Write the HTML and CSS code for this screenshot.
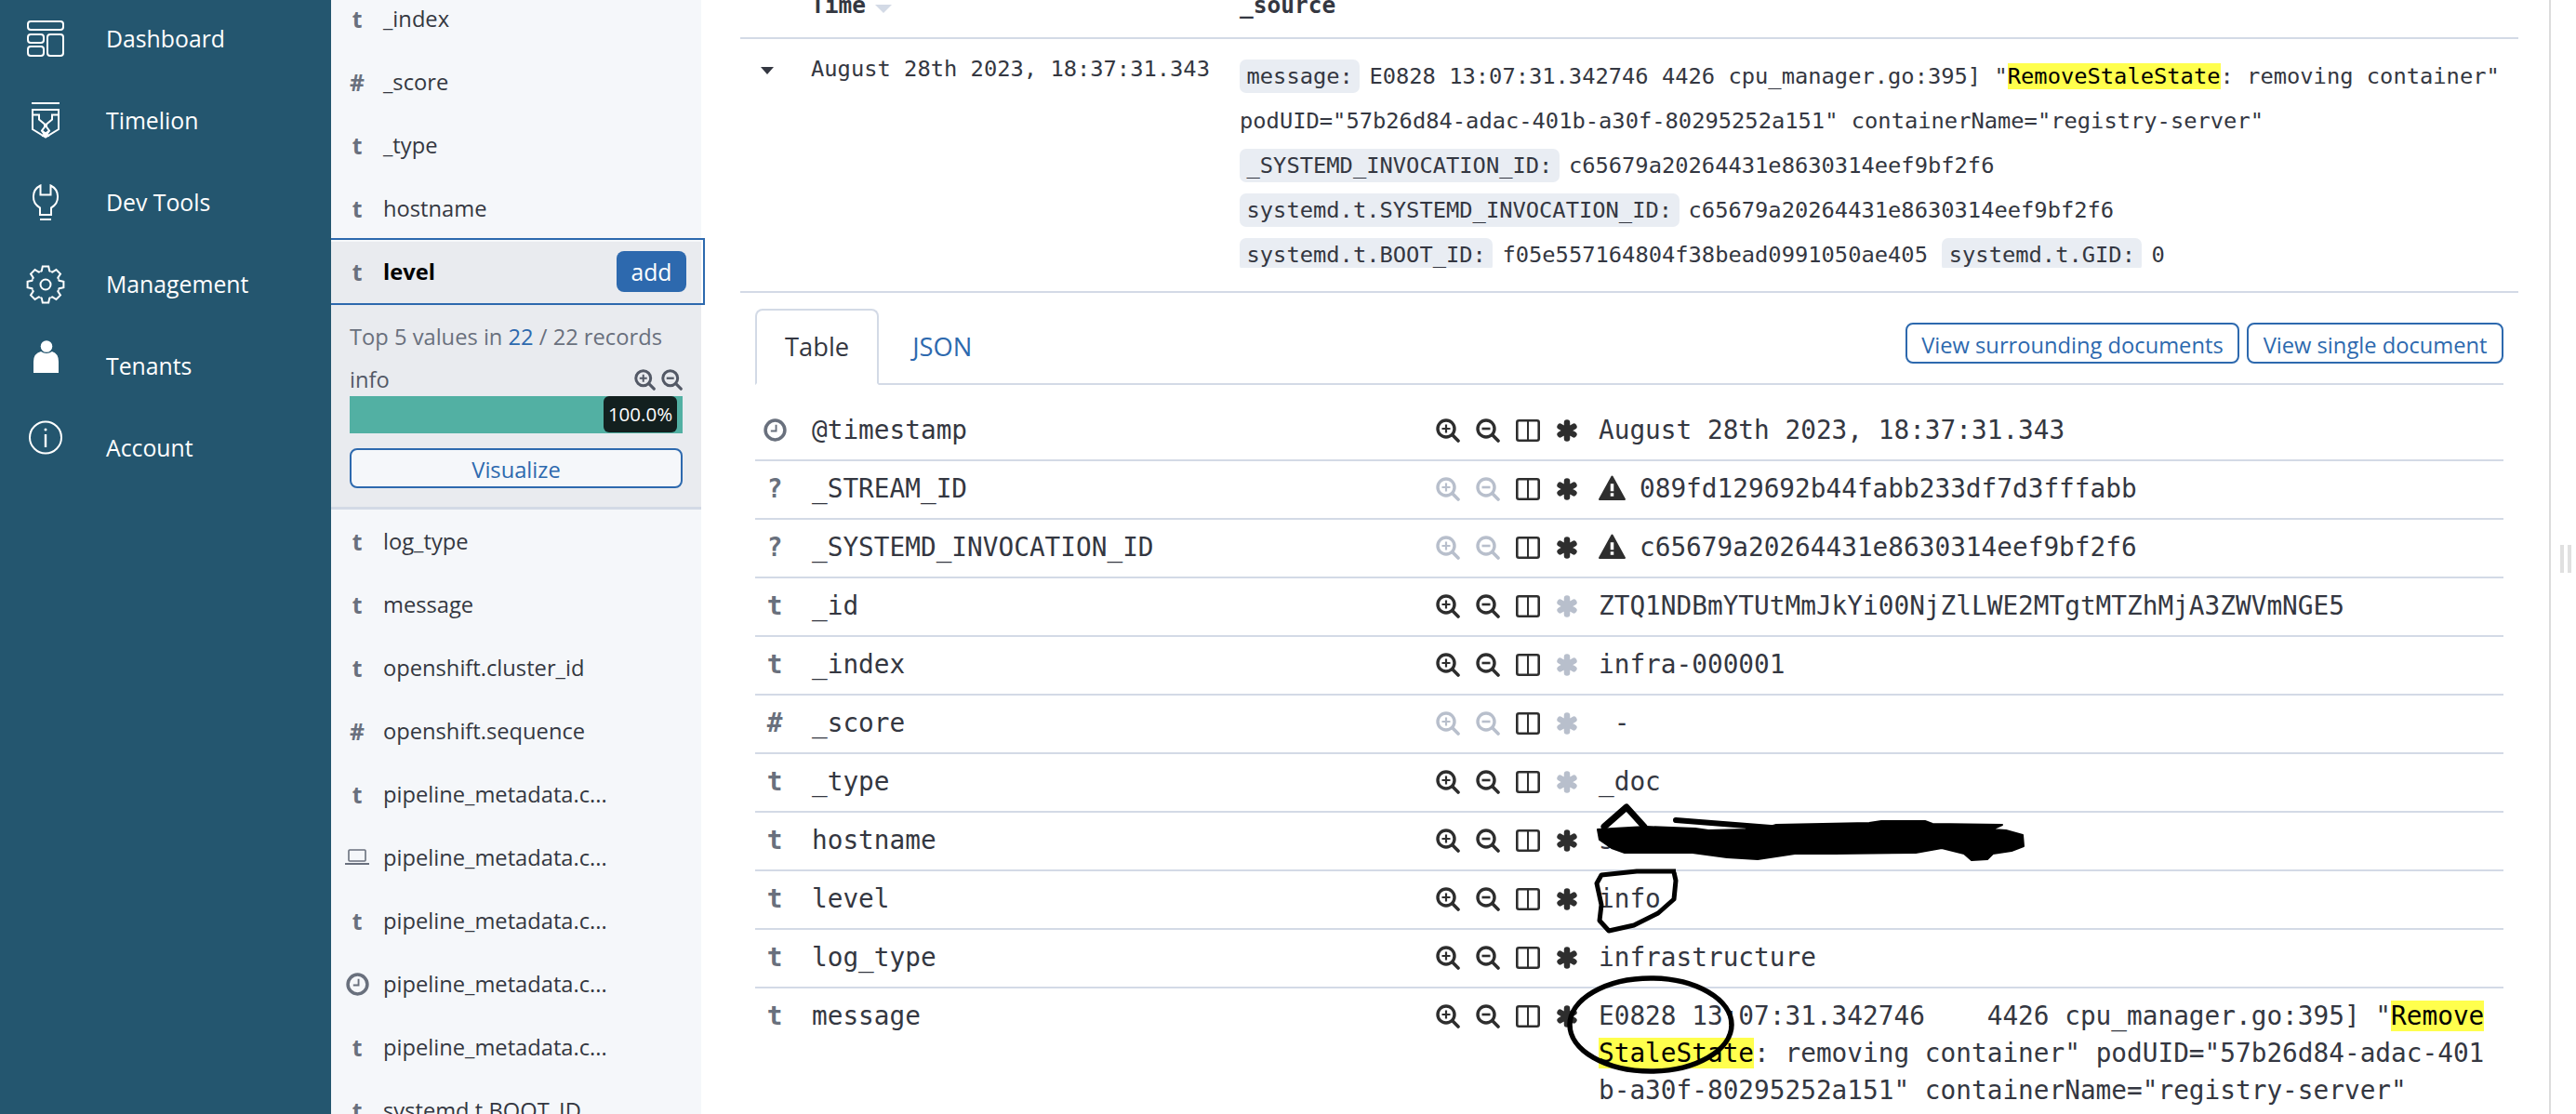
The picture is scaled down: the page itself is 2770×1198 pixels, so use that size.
FILE: index.html
```html
<!DOCTYPE html>
<html lang="en">
<head>
    <meta charset="UTF-8">
    <title>Discover</title>
    <link rel="stylesheet" href="styles.css">
</head>
<body>
    <svg class="defs" width="0" height="0">
        <symbol id="i-zoom-in" viewBox="0 0 26 26">
            <circle cx="11" cy="11" r="9" fill="none" stroke="currentColor" stroke-width="3.4"/>
            <path d="M17.8 17.8L24 24" stroke="currentColor" stroke-width="3.6" stroke-linecap="round"/>
            <path d="M6.500 11h9M11 6.500v9" stroke="currentColor" stroke-width="2.200"/>
        </symbol>
        <symbol id="i-zoom-out" viewBox="0 0 26 26">
            <circle cx="11" cy="11" r="9" fill="none" stroke="currentColor" stroke-width="3.4"/>
            <path d="M17.8 17.8L24 24" stroke="currentColor" stroke-width="3.6" stroke-linecap="round"/>
            <path d="M6.500 11h9" stroke="currentColor" stroke-width="2.600"/>
        </symbol>
        <symbol id="i-col" viewBox="0 0 26 24">
            <rect x="1.3" y="1.3" width="23.4" height="21.4" rx="2" fill="none" stroke="currentColor" stroke-width="2.600"/>
            <path d="M13 1v22" stroke="currentColor" stroke-width="2"/>
        </symbol>
        <symbol id="i-star" viewBox="0 0 24 24">
            <path d="M12 3.500v17M4.600 7.750l14.800 8.500M4.600 16.250l14.800-8.500" stroke="currentColor" stroke-width="6.500" stroke-linecap="round"/>
        </symbol>
        <symbol id="i-warn" viewBox="0 0 28 26">
            <path d="M14 1.500L27 25H1Z" fill="currentColor" stroke="currentColor" stroke-width="2" stroke-linejoin="round"/>
            <path d="M12.300 9h3.400v7.500h-3.400zM12.300 18.500h3.400v3.500h-3.400z" fill="#fff"/>
        </symbol>
        <symbol id="i-clock" viewBox="0 0 24 24">
            <circle cx="12" cy="12" r="10" fill="none" stroke="currentColor" stroke-width="3.400"/>
            <path d="M13 6.500V13H7.500" fill="none" stroke="currentColor" stroke-width="1.800"/>
        </symbol>
        <symbol id="i-laptop" viewBox="0 0 26 18">
            <rect x="4" y="1" width="18" height="12" rx="1" fill="none" stroke="currentColor" stroke-width="1.600"/>
            <path d="M0 16h26" stroke="currentColor" stroke-width="2"/>
        </symbol>
        <symbol id="i-tooth" viewBox="-22 -22 44 44" overflow="visible">
            <path d="M-5.600-14L-4.200-14.600L-3.200-19.400H3.200L4.200-14.600L5.600-14" fill="none" stroke="currentColor" stroke-width="2"/>
        </symbol>
    </svg>

    <div class="app">
        <nav class="sidebar">
            <a class="nav-item">
                <svg class="nav-icon" viewBox="0 0 60 60" fill="none" stroke="currentColor" stroke-width="2">
                    <rect x="10" y="12" width="38" height="9" rx="3"/>
                    <rect x="10" y="26" width="17" height="9" rx="3"/>
                    <rect x="10" y="39" width="17" height="10" rx="3"/>
                    <rect x="31" y="26" width="17" height="23" rx="3"/>
                </svg>
                <span>Dashboard</span>
            </a>
            <a class="nav-item">
                <svg class="nav-icon" viewBox="0 0 60 60" fill="none" stroke="currentColor" stroke-width="2">
                    <path d="M14 12h30M15 19h28v21l-14 8.500-14-8.500z"/>
                    <path d="M15 24.500h7v5l6 5v3l-3 4 4 6 4-6-3-4v-3l6-5v-5h7"/>
                    <path d="M25 41.500l8 6M33 41.500l-8 6"/>
                </svg>
                <span>Timelion</span>
            </a>
            <a class="nav-item">
                <svg class="nav-icon" viewBox="0 0 60 60" fill="none" stroke="currentColor" stroke-width="2">
                    <path d="M23.500 12.500A13.500 13.500 0 0 0 23 36.500V44H35V36.500A13.500 13.500 0 0 0 34.500 12.500V22.500H23.500Z"/>
                    <path d="M23 49h12"/>
                </svg>
                <span>Dev Tools</span>
            </a>
            <a class="nav-item">
                <svg class="nav-icon" viewBox="0 0 60 60" fill="none" stroke="currentColor" stroke-width="2">
                    <circle cx="29" cy="31" r="5.500"/>
                    <g transform="translate(29 31)">
                        <use href="#i-tooth" x="-22" y="-22" width="44" height="44"/>
                        <use href="#i-tooth" x="-22" y="-22" width="44" height="44" transform="rotate(45)"/>
                        <use href="#i-tooth" x="-22" y="-22" width="44" height="44" transform="rotate(90)"/>
                        <use href="#i-tooth" x="-22" y="-22" width="44" height="44" transform="rotate(135)"/>
                        <use href="#i-tooth" x="-22" y="-22" width="44" height="44" transform="rotate(180)"/>
                        <use href="#i-tooth" x="-22" y="-22" width="44" height="44" transform="rotate(225)"/>
                        <use href="#i-tooth" x="-22" y="-22" width="44" height="44" transform="rotate(270)"/>
                        <use href="#i-tooth" x="-22" y="-22" width="44" height="44" transform="rotate(315)"/>
                    </g>
                </svg>
                <span>Management</span>
            </a>
            <a class="nav-item">
                <svg class="nav-icon" viewBox="0 0 60 60" fill="currentColor">
                    <circle cx="30" cy="9.500" r="6.300"/>
                    <path d="M16 38V26Q16 17 24 15Q30 19 36 15Q43 17 43 26V38Z"/>
                </svg>
                <span>Tenants</span>
            </a>
            <a class="nav-item">
                <svg class="nav-icon" viewBox="0 0 60 60" fill="none" stroke="currentColor" stroke-width="2">
                    <circle cx="29" cy="19.500" r="17"/>
                    <path d="M29 16v14" stroke-width="2.400"/>
                    <circle cx="29" cy="11" r="1.500" fill="currentColor" stroke="none"/>
                </svg>
                <span>Account</span>
            </a>
        </nav>

        <aside class="fields">
            <div class="field"><span class="field-type">t</span><span class="field-name">_index</span></div>
            <div class="field"><span class="field-type">#</span><span class="field-name">_score</span></div>
            <div class="field"><span class="field-type">t</span><span class="field-name">_type</span></div>
            <div class="field"><span class="field-type">t</span><span class="field-name">hostname</span></div>
            <div class="field field-active">
                <span class="field-type">t</span><span class="field-name">level</span>
                <button class="btn-add">add</button>
            </div>
            <div class="field-details">
                <div class="details-title">Top 5 values in <span class="link">22</span> / 22 records</div>
                <div class="details-value">
                    <span>info</span>
                    <span class="details-zoom">
                        <svg class="zoom-small"><use href="#i-zoom-in"/></svg>
                        <svg class="zoom-small"><use href="#i-zoom-out"/></svg>
                    </span>
                </div>
                <div class="bar">
                    <span class="bar-tip">100.0%</span>
                </div>
                <button class="btn-visualize">Visualize</button>
            </div>
            <div class="field"><span class="field-type">t</span><span class="field-name">log_type</span></div>
            <div class="field"><span class="field-type">t</span><span class="field-name">message</span></div>
            <div class="field"><span class="field-type">t</span><span class="field-name">openshift.cluster_id</span></div>
            <div class="field"><span class="field-type">#</span><span class="field-name">openshift.sequence</span></div>
            <div class="field"><span class="field-type">t</span><span class="field-name">pipeline_metadata.c...</span></div>
            <div class="field"><span class="field-type"><svg class="type-laptop"><use href="#i-laptop"/></svg></span><span class="field-name">pipeline_metadata.c...</span></div>
            <div class="field"><span class="field-type">t</span><span class="field-name">pipeline_metadata.c...</span></div>
            <div class="field"><span class="field-type"><svg class="type-clock"><use href="#i-clock"/></svg></span><span class="field-name">pipeline_metadata.c...</span></div>
            <div class="field"><span class="field-type">t</span><span class="field-name">pipeline_metadata.c...</span></div>
            <div class="field"><span class="field-type">t</span><span class="field-name">systemd.t.BOOT_ID</span></div>
        </aside>

        <main class="main">
            <div class="doc-header">
                <span class="col-time">Time<i class="sort-caret"></i></span>
                <span class="col-source">_source</span>
            </div>

            <div class="doc-row">
                <span class="doc-toggle"><i class="toggle-caret"></i></span>
                <span class="doc-time">August 28th 2023, 18:37:31.343</span>
                <div class="doc-source">
                    <span class="pair-wrap"><span class="pill">message:</span><span class="pair-value">E0828 13:07:31.342746 4426 cpu_manager.go:395] "<mark>RemoveStaleState</mark>: removing container" podUID="57b26d84-adac-401b-a30f-80295252a151" containerName="registry-server"</span></span>
                    <span class="pair"><span class="pill">_SYSTEMD_INVOCATION_ID:</span><span class="pair-value">c65679a20264431e8630314eef9bf2f6</span></span>
                    <span class="pair"><span class="pill">systemd.t.SYSTEMD_INVOCATION_ID:</span><span class="pair-value">c65679a20264431e8630314eef9bf2f6</span></span>
                    <span class="pair"><span class="pill">systemd.t.BOOT_ID:</span><span class="pair-value">f05e557164804f38bead0991050ae405</span></span>
                    <span class="pair"><span class="pill">systemd.t.GID:</span><span class="pair-value">0</span></span>
                </div>
            </div>

            <div class="doc-detail">
                <div class="tabs">
                    <a class="tab tab-active">Table</a>
                    <a class="tab">JSON</a>
                    <div class="tab-actions">
                        <a class="btn-outline">View surrounding documents</a>
                        <a class="btn-outline">View single document</a>
                    </div>
                </div>

                <div class="kv-row">
                    <span class="kv-type"><svg class="kv-clock"><use href="#i-clock"/></svg></span>
                    <span class="kv-name">@timestamp</span>
                    <span class="kv-actions">
                        <svg class="act"><use href="#i-zoom-in"/></svg><svg class="act"><use href="#i-zoom-out"/></svg><svg class="act act-col"><use href="#i-col"/></svg><svg class="act act-star"><use href="#i-star"/></svg>
                    </span>
                    <span class="kv-value">August 28th 2023, 18:37:31.343</span>
                </div>
                <div class="kv-row">
                    <span class="kv-type">?</span>
                    <span class="kv-name">_STREAM_ID</span>
                    <span class="kv-actions">
                        <svg class="act off"><use href="#i-zoom-in"/></svg><svg class="act off"><use href="#i-zoom-out"/></svg><svg class="act act-col"><use href="#i-col"/></svg><svg class="act act-star"><use href="#i-star"/></svg>
                    </span>
                    <span class="kv-value"><svg class="warn"><use href="#i-warn"/></svg>089fd129692b44fabb233df7d3fffabb</span>
                </div>
                <div class="kv-row">
                    <span class="kv-type">?</span>
                    <span class="kv-name">_SYSTEMD_INVOCATION_ID</span>
                    <span class="kv-actions">
                        <svg class="act off"><use href="#i-zoom-in"/></svg><svg class="act off"><use href="#i-zoom-out"/></svg><svg class="act act-col"><use href="#i-col"/></svg><svg class="act act-star"><use href="#i-star"/></svg>
                    </span>
                    <span class="kv-value"><svg class="warn"><use href="#i-warn"/></svg>c65679a20264431e8630314eef9bf2f6</span>
                </div>
                <div class="kv-row">
                    <span class="kv-type">t</span>
                    <span class="kv-name">_id</span>
                    <span class="kv-actions">
                        <svg class="act"><use href="#i-zoom-in"/></svg><svg class="act"><use href="#i-zoom-out"/></svg><svg class="act act-col"><use href="#i-col"/></svg><svg class="act act-star off"><use href="#i-star"/></svg>
                    </span>
                    <span class="kv-value">ZTQ1NDBmYTUtMmJkYi00NjZlLWE2MTgtMTZhMjA3ZWVmNGE5</span>
                </div>
                <div class="kv-row">
                    <span class="kv-type">t</span>
                    <span class="kv-name">_index</span>
                    <span class="kv-actions">
                        <svg class="act"><use href="#i-zoom-in"/></svg><svg class="act"><use href="#i-zoom-out"/></svg><svg class="act act-col"><use href="#i-col"/></svg><svg class="act act-star off"><use href="#i-star"/></svg>
                    </span>
                    <span class="kv-value">infra-000001</span>
                </div>
                <div class="kv-row">
                    <span class="kv-type">#</span>
                    <span class="kv-name">_score</span>
                    <span class="kv-actions">
                        <svg class="act off"><use href="#i-zoom-in"/></svg><svg class="act off"><use href="#i-zoom-out"/></svg><svg class="act act-col"><use href="#i-col"/></svg><svg class="act act-star off"><use href="#i-star"/></svg>
                    </span>
                    <span class="kv-value"> -</span>
                </div>
                <div class="kv-row">
                    <span class="kv-type">t</span>
                    <span class="kv-name">_type</span>
                    <span class="kv-actions">
                        <svg class="act"><use href="#i-zoom-in"/></svg><svg class="act"><use href="#i-zoom-out"/></svg><svg class="act act-col"><use href="#i-col"/></svg><svg class="act act-star off"><use href="#i-star"/></svg>
                    </span>
                    <span class="kv-value">_doc</span>
                </div>
                <div class="kv-row">
                    <span class="kv-type">t</span>
                    <span class="kv-name">hostname</span>
                    <span class="kv-actions">
                        <svg class="act"><use href="#i-zoom-in"/></svg><svg class="act"><use href="#i-zoom-out"/></svg><svg class="act act-col"><use href="#i-col"/></svg><svg class="act act-star"><use href="#i-star"/></svg>
                    </span>
                    <span class="kv-value">s</span>
                </div>
                <div class="kv-row">
                    <span class="kv-type">t</span>
                    <span class="kv-name">level</span>
                    <span class="kv-actions">
                        <svg class="act"><use href="#i-zoom-in"/></svg><svg class="act"><use href="#i-zoom-out"/></svg><svg class="act act-col"><use href="#i-col"/></svg><svg class="act act-star"><use href="#i-star"/></svg>
                    </span>
                    <span class="kv-value">info</span>
                </div>
                <div class="kv-row">
                    <span class="kv-type">t</span>
                    <span class="kv-name">log_type</span>
                    <span class="kv-actions">
                        <svg class="act"><use href="#i-zoom-in"/></svg><svg class="act"><use href="#i-zoom-out"/></svg><svg class="act act-col"><use href="#i-col"/></svg><svg class="act act-star"><use href="#i-star"/></svg>
                    </span>
                    <span class="kv-value">infrastructure</span>
                </div>
                <div class="kv-row">
                    <span class="kv-type">t</span>
                    <span class="kv-name">message</span>
                    <span class="kv-actions">
                        <svg class="act"><use href="#i-zoom-in"/></svg><svg class="act"><use href="#i-zoom-out"/></svg><svg class="act act-col"><use href="#i-col"/></svg><svg class="act act-star"><use href="#i-star"/></svg>
                    </span>
                    <span class="kv-value">E0828 13:07:31.342746    4426 cpu_manager.go:395] "<mark>RemoveStaleState</mark>: removing container" podUID="57b26d84-adac-401b-a30f-80295252a151" containerName="registry-server"</span>
                </div>
            </div>
        </main>

        <div class="gutter"><i></i><i></i></div>
    </div>

    <!-- pen marks drawn on top of the screenshot -->
    <svg class="ink" viewBox="0 0 2770 1198">
        <path d="M1725 889L1749 868L1768 889" fill="none" stroke="#000" stroke-width="7" stroke-linejoin="round" stroke-linecap="round"/>
        <path d="M1802 882L1904 890" fill="none" stroke="#000" stroke-width="6" stroke-linecap="round"/>
        <path d="M1718 892L1770 889L1823 891L1837 893L1877 892L1903 889L1910 887L2010 885L2023 883L2070 883L2078 886L2153 887L2142 892L2157 893L2175 898L2176 910L2163 915L2143 918L2137 924L2120 925L2112 918L2088 912L2060 917L1973 918L1930 918L1890 924L1857 922L1820 917L1747 917L1733 912L1720 903Z" fill="#000" stroke="#000" stroke-width="2" stroke-linejoin="round"/>
        <path d="M1802 937L1760 937L1722 941L1717 950L1722 973L1720 990L1730 1001L1757 995L1783 982L1800 967L1802 947L1800 938" fill="none" stroke="#000" stroke-width="5" stroke-linejoin="round"/>
        <ellipse cx="1775" cy="1102" rx="87" ry="50" fill="none" stroke="#000" stroke-width="5.500"/>
    </svg>
</body>
</html>
```

FILE: styles.css
```css
html, body {
    margin: 0;
    height: 100%;
    overflow: hidden;
    background: #fff;
}
body {
    position: relative;
    font-family: "Open Sans", sans-serif;
    font-size: 23.7px;
    color: #343741;
}
.defs {
    position: absolute;
}
.app {
    display: flex;
    height: 1198px;
}

/* left nav */
.sidebar {
    position: relative;
    z-index: 1;
    flex: 0 0 356px;
    background: #24566f;
    color: #fff;
}
.nav-item {
    display: flex;
    align-items: center;
    height: 88px;
    font-size: 24.8px;
}
.nav-item:first-child {
    margin-top: -3px;
}
.nav-icon {
    flex: 0 0 60px;
    width: 60px;
    height: 60px;
    margin: 0 34px 0 20px;
}

/* field list */
.fields {
    flex: 0 0 398px;
    margin-top: -14px;
    background: #f5f7fa;
}
.field {
    display: flex;
    align-items: center;
    height: 68px;
    padding-right: 16px;
    box-sizing: border-box;
}
.field-type {
    flex: 0 0 56px;
    text-align: center;
    font-size: 24.7px;
    font-weight: 700;
    color: #69707d;
}
.field-name {
    flex: 1;
}
.type-laptop {
    display: block;
    width: 26px;
    height: 18px;
    margin: 0 auto;
}
.type-clock {
    display: block;
    width: 25px;
    height: 25px;
    margin: 0 auto;
}
.field-active {
    position: relative;
    margin-right: -2px;
    padding-bottom: 2px;
    border-top: 2px solid #f5f7fa;
    border-right: 2px solid #fff;
    background: #e9ebef;
    outline: 2px solid #2d69ae;
}
.field-active .field-name {
    font-weight: 700;
    color: #000;
}
.btn-add {
    width: 75px;
    height: 44px;
    padding: 0;
    border: 0;
    border-radius: 8px;
    background: #2d69ae;
    color: #fff;
    font: inherit;
    font-size: 24.7px;
}
.field-details {
    height: 222px;
    padding: 19px 20px 0;
    border-bottom: 3px solid #d3dae6;
    box-sizing: border-box;
    background: #e9ebef;
}
.details-title {
    line-height: 34px;
    color: #69707d;
}
.link {
    color: #2d69ae;
}
.details-value {
    display: flex;
    justify-content: space-between;
    align-items: center;
    height: 34px;
    margin-top: 12px;
    color: #535966;
}
.details-zoom {
    display: flex;
    gap: 6px;
}
.zoom-small {
    width: 23px;
    height: 23px;
    color: #535966;
}
.bar {
    display: flex;
    justify-content: flex-end;
    height: 40px;
    margin-top: 1px;
    padding-right: 6px;
    box-sizing: border-box;
    background: #52b0a3;
}
.bar-tip {
    width: 79px;
    height: 39px;
    border-radius: 6px;
    background: #13201f;
    color: #fff;
    font-size: 20.5px;
    line-height: 39px;
    text-align: center;
}
.btn-visualize {
    display: block;
    width: 100%;
    height: 43px;
    margin-top: 16px;
    padding: 2px 0 0;
    border: 2px solid #2d69ae;
    border-radius: 8px;
    background: #f5f7fa;
    color: #2d69ae;
    font: inherit;
}

/* document */
.main {
    flex: 0 0 1989px;
    box-sizing: border-box;
    padding: 0 33px 0 42px;
    border-right: 2px solid #dcdcdc;
    font-family: "DejaVu Sans Mono", "Liberation Mono", monospace;
}
.doc-header {
    display: flex;
    margin-top: -30px;
    padding: 18px 0 16px 76px;
    border-bottom: 2px solid #d3dae6;
    font-size: 24.5px;
    line-height: 36px;
    font-weight: 700;
}
.col-time {
    flex: 0 0 461px;
}
.sort-caret {
    display: inline-block;
    margin-left: 10px;
    border-left: 9px solid transparent;
    border-right: 9px solid transparent;
    border-top: 9px solid #d3dae6;
}
.doc-row {
    display: flex;
    border-bottom: 2px solid #d3dae6;
    font-size: 23.75px;
}
.doc-toggle {
    flex: 0 0 76px;
    padding: 30px 0 0 22px;
    box-sizing: border-box;
}
.toggle-caret {
    display: block;
    border-left: 7.5px solid transparent;
    border-right: 7.5px solid transparent;
    border-top: 8px solid #343741;
    width: 0;
}
.doc-time {
    flex: 0 0 461px;
    padding-top: 8px;
    line-height: 48px;
}
.doc-source {
    flex: 1;
    height: 230px;
    margin: 16px 0 25px;
    overflow: hidden;
    line-height: 48px;
}
.pair {
    white-space: nowrap;
}
.pill {
    margin-right: 10px;
    padding: 4px 7.5px;
    border-radius: 7px;
    background: #e9edf3;
}
.pair-value {
    margin-right: 1px;
}
mark {
    background: #ffff4d;
    color: #000;
}
.doc-detail {
    padding: 0 16px;
}
.tabs {
    display: flex;
    align-items: flex-start;
    height: 82px;
    margin-top: 17px;
    border-bottom: 2px solid #d3dae6;
    box-sizing: border-box;
    font-family: "Open Sans", sans-serif;
}
.tab {
    height: 82px;
    padding: 0 32px;
    border: 2px solid transparent;
    box-sizing: border-box;
    line-height: 78px;
    color: #2d69ae;
    font-size: 27.3px;
}
.tab-active {
    padding: 0 30px;
    border-color: #d3dae6;
    border-bottom-color: #fff;
    border-radius: 8px 8px 0 0;
    background: #fff;
    color: #343741;
}
.tab-active + .tab {
    margin-left: 2px;
}
.tab-actions {
    display: flex;
    gap: 8px;
    margin: 15px 0 0 auto;
}
.btn-outline {
    height: 44px;
    padding: 0 15.5px;
    border: 2px solid #2d69ae;
    border-radius: 8px;
    box-sizing: border-box;
    line-height: 44px;
    color: #2d69ae;
}
.kv-row {
    display: flex;
    align-items: flex-start;
    padding: 10px 0 11px;
    border-bottom: 2px solid #d3dae6;
    font-size: 27.75px;
    line-height: 40px;
}
.tabs + .kv-row {
    margin-top: 19px;
}
.kv-row:last-child {
    border-bottom: 0;
}
.kv-type {
    flex: 0 0 42px;
    margin-right: 19px;
    text-align: center;
    font-weight: 700;
    color: #69707d;
}
.kv-clock {
    display: block;
    width: 25px;
    height: 25px;
    margin: 7px auto 0;
}
.kv-name {
    flex: 0 0 662px;
}
.kv-actions {
    flex: 0 0 172px;
    display: flex;
    align-items: center;
    height: 40px;
    margin-right: 12px;
    color: #2e2e2e;
}
.act {
    width: 26px;
    height: 26px;
    margin: 0 8.5px;
}
.act-col {
    height: 24px;
}
.act-star {
    width: 24px;
    height: 24px;
    margin-left: 9px;
}
.off {
    color: #b8bfcc;
}
.kv-value {
    flex: 0 0 960px;
    white-space: pre-wrap;
    word-break: break-all;
}
.warn {
    width: 29px;
    height: 27px;
    margin-right: 15px;
    vertical-align: -3px;
    color: #2e2e2e;
}

/* right edge with drag handle */
.gutter {
    display: flex;
    gap: 4px;
    padding: 586px 0 0 10px;
}
.gutter i {
    width: 4px;
    height: 30px;
    background: #e0e0e0;
}
.ink {
    position: absolute;
    top: 0;
    left: 0;
    width: 2770px;
    height: 1198px;
    z-index: 2;
    pointer-events: none;
}
```
